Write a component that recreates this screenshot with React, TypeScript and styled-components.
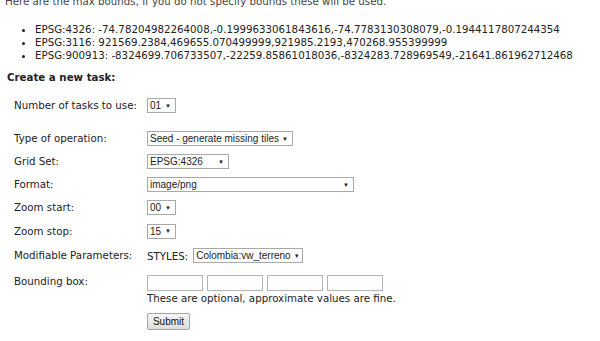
import React from 'react';
import styled, { createGlobalStyle } from 'styled-components';

const GlobalStyle = createGlobalStyle`
  html, body {
    margin: 0;
    padding: 0;
    background: #ffffff;
  }
  body {
    font-family: "DejaVu Sans", Verdana, sans-serif;
    font-size: 10.25px;
    color: #222222;
    overflow: hidden;
  }
`;

const bounds = [
  'EPSG:4326: -74.78204982264008,-0.1999633061843616,-74.7783130308079,-0.1944117807244354',
  'EPSG:3116: 921569.2384,469655.070499999,921985.2193,470268.955399999',
  'EPSG:900913: -8324699.706733507,-22259.85861018036,-8324283.728969549,-21641.861962712468',
];

const Page = styled.div`
  width: 600px;
  height: 341px;
  overflow: hidden;
  padding: 0 5px;
  box-sizing: border-box;
`;

// the page is scrolled a little, so the intro line is cut at the top
const Scrolled = styled.div`
  display: flex;
  flex-direction: column;
  margin-top: -5px;
`;

const Intro = styled.p`
  margin: 0;
  line-height: 13px;
  color: #444444;
  white-space: nowrap;
`;

const BoundsList = styled.ul`
  margin: 15px 0 0;
  padding-left: 30px;
  line-height: 13px;
  white-space: nowrap;
`;

const Heading = styled.h3`
  margin: 9px 0 0 2px;
  font-size: 10.25px;
  font-weight: bold;
  line-height: 13px;
`;

const Form = styled.div`
  margin: 10px 0 0 9px;
  display: grid;
  grid-template-columns: 133px auto;
  align-items: center;
`;

const Spacer = styled.div`
  grid-column: 1 / -1;
  height: 10px;
`;

const Label = styled.div<{ $top?: boolean }>`
  align-self: ${({ $top }) => ($top ? 'start' : 'center')};
  padding-top: ${({ $top }) => ($top ? '7px' : '0')};
  line-height: 13px;
  white-space: nowrap;
`;

const Cell = styled.div<{ $h: number }>`
  min-height: ${({ $h }) => $h}px;
  display: flex;
  align-items: center;
  gap: 5px;
`;

const SelectBox = styled.div<{ $w: number }>`
  width: ${({ $w }) => $w}px;
  height: 15px;
  box-sizing: border-box;
  border: 1px solid #a9a9a9;
  background: #ffffff;
  display: flex;
  align-items: center;
  justify-content: space-between;
  padding: 0 4px 0 2px;
  overflow: hidden;
  white-space: nowrap;
  font-family: "Liberation Sans", Arial, sans-serif;
  font-size: 10px;
  color: #222222;
`;

const Arrow = styled.span`
  font-size: 6px;
  line-height: 1;
  margin-left: 3px;
  flex-shrink: 0;
`;

const BoxStack = styled.div`
  display: flex;
  flex-direction: column;
  align-items: flex-start;
  padding-top: 7px;
`;

const InputRow = styled.div`
  display: flex;
  gap: 4px;
`;

const TextInput = styled.div`
  width: 56px;
  height: 16px;
  box-sizing: border-box;
  border: 1px solid #b5b5b5;
  background: #ffffff;
`;

const Hint = styled.div`
  line-height: 13px;
  margin-top: 1px;
  white-space: nowrap;
`;

const SubmitButton = styled.div`
  margin-top: 8px;
  width: 43px;
  height: 17px;
  box-sizing: border-box;
  border: 1px solid #a6a6a6;
  border-radius: 2px;
  background: linear-gradient(#f6f6f6, #dddddd);
  font-family: "Liberation Sans", Arial, sans-serif;
  font-size: 10px;
  display: flex;
  align-items: center;
  justify-content: center;
  color: #111111;
`;

const Select: React.FC<{ w: number; value: string }> = ({ w, value }) => (
  <SelectBox $w={w}>
    <span>{value}</span>
    <Arrow>▼</Arrow>
  </SelectBox>
);

export default function App() {
  return (
    <Page>
      <GlobalStyle />
      <Scrolled>
        <Intro>Here are the max bounds, if you do not specify bounds these will be used.</Intro>
        <BoundsList>
          {bounds.map((b) => (
            <li key={b}>{b}</li>
          ))}
        </BoundsList>
        <Heading>Create a new task:</Heading>
        <Form>
          <Label>Number of tasks to use:</Label>
          <Cell $h={23}>
            <Select w={29} value="01" />
          </Cell>
          <Spacer />
          <Label>Type of operation:</Label>
          <Cell $h={23}>
            <Select w={146} value="Seed - generate missing tiles" />
          </Cell>
          <Label>Grid Set:</Label>
          <Cell $h={23}>
            <Select w={82} value="EPSG:4326" />
          </Cell>
          <Label>Format:</Label>
          <Cell $h={23}>
            <Select w={207} value="image/png" />
          </Cell>
          <Label>Zoom start:</Label>
          <Cell $h={23}>
            <Select w={29} value="00" />
          </Cell>
          <Label>Zoom stop:</Label>
          <Cell $h={24}>
            <Select w={29} value="15" />
          </Cell>
          <Label>Modifiable Parameters:</Label>
          <Cell $h={25}>
            <span>STYLES:</span>
            <Select w={110} value="Colombia:vw_terreno" />
          </Cell>
          <Label $top>Bounding box:</Label>
          <Cell $h={25}>
            <BoxStack>
              <InputRow>
                <TextInput />
                <TextInput />
                <TextInput />
                <TextInput />
              </InputRow>
              <Hint>These are optional, approximate values are fine.</Hint>
              <SubmitButton>Submit</SubmitButton>
            </BoxStack>
          </Cell>
        </Form>
      </Scrolled>
    </Page>
  );
}
